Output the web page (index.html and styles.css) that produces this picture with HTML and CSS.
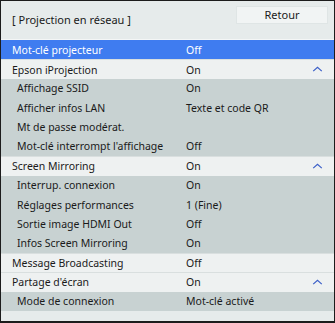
FILE: index.html
```html
<!DOCTYPE html>
<html lang="fr">
<head>
<meta charset="utf-8">
<link rel="stylesheet" href="styles.css">
</head>
<body>
<div class="panel">
  <div class="header">
    <div class="title">[ Projection en réseau ]</div>
    <div class="btn">Retour</div>
  </div>
  <div class="list">
    <div class="row top sel"><span class="lbl">Mot-clé projecteur</span><span class="val">Off</span></div>
    <div class="row top"><span class="lbl">Epson iProjection</span><span class="val">On</span><svg class="chev" viewBox="0 0 12 7"><path d="M1 6 L6 1.5 L11 6" /></svg></div>
    <div class="row sub"><span class="lbl">Affichage SSID</span><span class="val">On</span></div>
    <div class="row sub"><span class="lbl">Afficher infos LAN</span><span class="val">Texte et code QR</span></div>
    <div class="row sub"><span class="lbl">Mt de passe modérat.</span><span class="val"></span></div>
    <div class="row sub"><span class="lbl">Mot-clé interrompt l'affichage</span><span class="val">Off</span></div>
    <div class="row top"><span class="lbl">Screen Mirroring</span><span class="val">On</span><svg class="chev" viewBox="0 0 12 7"><path d="M1 6 L6 1.5 L11 6" /></svg></div>
    <div class="row sub"><span class="lbl">Interrup. connexion</span><span class="val">On</span></div>
    <div class="row sub"><span class="lbl">Réglages performances</span><span class="val">1 (Fine)</span></div>
    <div class="row sub"><span class="lbl">Sortie image HDMI Out</span><span class="val">Off</span></div>
    <div class="row sub"><span class="lbl">Infos Screen Mirroring</span><span class="val">On</span></div>
    <div class="row top"><span class="lbl">Message Broadcasting</span><span class="val">Off</span></div>
    <div class="row top"><span class="lbl">Partage d'écran</span><span class="val">On</span><svg class="chev" viewBox="0 0 12 7"><path d="M1 6 L6 1.5 L11 6" /></svg></div>
    <div class="row sub"><span class="lbl">Mode de connexion</span><span class="val">Mot-clé activé</span></div>
  </div>
</div>
</body>
</html>
```
FILE: styles.css
```css
html, body {
  margin: 0;
  padding: 0;
  background: #e6ebeb;
}
.panel {
  box-sizing: border-box;
  width: 335px;
  height: 323px;
  border: 1px solid #1c1c1c;
  border-bottom-width: 2px;
  background: #e6ebeb;
  font-family: "Noto Sans", "Open Sans", sans-serif;
  font-size: 10.5px;
  color: #1a1a1a;
  display: flex;
  flex-direction: column;
}
.header {
  height: 38px;
  display: flex;
  justify-content: space-between;
  align-items: flex-start;
  border-bottom: 1px solid #f4f6f6;
}
.title {
  margin: 11px 0 0 11px;
  font-size: 11px;
}
.btn {
  margin: 5px 6px 0 0;
  width: 92px;
  height: 18px;
  box-sizing: border-box;
  border: 1px solid #dfe5e5;
  background: #f1f4f4;
  text-align: center;
  line-height: 16px;
  font-size: 11px;
}
.list {
  display: flex;
  flex-direction: column;
}
.row {
  height: 19.36px;
  box-sizing: border-box;
  display: flex;
  align-items: center;
  position: relative;
}
.top {
  background: #eef1f1;
  border-top: 1px solid #d9dfdf;
}
.sub {
  background: #c8d2d2;
}
.sel {
  background: #3f7cf0;
  color: #ffffff;
  border-top: none;
}
.lbl {
  width: 174px;
  padding-left: 11px;
  white-space: nowrap;
}
.sub .lbl {
  padding-left: 16px;
  width: 169px;
}
.val {
  white-space: nowrap;
}
.chev {
  position: absolute;
  right: 11px;
  top: 6px;
  width: 11px;
  height: 6px;
  fill: none;
  stroke: #3a5ec8;
  stroke-width: 1.4;
}
```
